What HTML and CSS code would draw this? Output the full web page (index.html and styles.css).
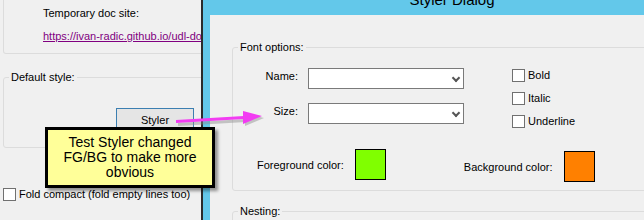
FILE: index.html
```html
<!DOCTYPE html>
<html>
<head>
  <title>Styler Dialog</title>
  <link rel="stylesheet" href="styles.css">
</head>
<body>

  <div class="screen">

    <section class="owner">
      <div class="group doc-group">
        <div class="doc-label">Temporary doc site:</div>
        <a class="doc-link" href="#">https://ivan-radic.github.io/udl-documentation/</a>
      </div>

      <fieldset class="group style-group">
        <legend>Default style:</legend>
        <div class="style-row">
          <button class="btn default">Styler</button>
        </div>
      </fieldset>

      <label class="check fold"><span class="box"></span>Fold compact (fold empty lines too)</label>
    </section>

    <section class="dialog">
      <div class="titlebar">Styler Dialog</div>
      <div class="client">

        <fieldset class="group font-group">
          <legend>Font options:</legend>
          <div class="font-top">
            <div class="combos">
              <div class="field">
                <label class="field-label">Name:</label>
                <div class="combo"><span class="chev"></span></div>
              </div>
              <div class="field">
                <label class="field-label">Size:</label>
                <div class="combo"><span class="chev"></span></div>
              </div>
            </div>
            <div class="styles">
              <label class="check"><span class="box"></span>Bold</label>
              <label class="check"><span class="box"></span>Italic</label>
              <label class="check"><span class="box"></span>Underline</label>
            </div>
          </div>
          <div class="colors">
            <div class="color fg">
              <span>Foreground color:</span>
              <span class="swatch green"></span>
            </div>
            <div class="color bg">
              <span>Background color:</span>
              <span class="swatch orange"></span>
            </div>
          </div>
        </fieldset>

        <fieldset class="group nest-group">
          <legend>Nesting:</legend>
        </fieldset>

      </div>
    </section>

    <!-- annotation drawn over the screenshot -->
    <div class="callout">Test Styler changed FG/BG to make more obvious</div>
    <svg class="arrow" width="100" height="24" viewBox="0 0 100 24">
      <g transform="translate(2,2)" fill="#8c8c8c" opacity="0.45">
        <polygon points="0,10 68,6 68,9 0,13" />
        <polygon points="67,0 86,5 67,13" />
      </g>
      <polygon points="0,9 68,5 68,8 0,12" fill="#f23cf2" />
      <polygon points="67,0 86,5 67,13" fill="#f23cf2" />
    </svg>

  </div>

</body>
</html>
```

FILE: styles.css
```css
*{
    box-sizing: border-box;
}

body{
    margin: 0;
    font-family: "Liberation Sans", Arial, sans-serif;
    font-size: 11px;
    color: #000;
    background: #f0f0f0;
}

.screen{
    position: relative;
    width: 644px;
    height: 220px;
    overflow: hidden;
}

/* left window (owner form) */
.owner{
    width: 201px;
    height: 220px;
    overflow: hidden;
    background: #f0f0f0;
}

.group{
    border: 1px solid #dcdcdc;
    border-radius: 3px;
    margin: 0;
}

fieldset.group{
    padding: 0;
}

fieldset.group legend{
    padding: 0 2px;
    margin-left: 5px;
    line-height: 12px;
}

.doc-group{
    width: 230px;
    height: 56px;
    margin-left: 3px;
    margin-top: -2px;
    border-top: none;
    padding: 9px 0 0 39px;
}

.doc-label{
    line-height: 13px;
    margin-bottom: 10px;
}

.doc-link{
    color: #800080;
    line-height: 13px;
    white-space: nowrap;
}

.style-group{
    width: 230px;
    height: 77px;
    margin: 17px 0 0 3px;
}

.style-row{
    padding: 25px 0 0 112px;
}

.btn{
    font: inherit;
    width: 78px;
    height: 23px;
    background: #e5e5e5;
    border: 1px solid #adadad;
}

.btn.default{
    border-color: #3c7fb1;
}

.check{
    display: flex;
    align-items: center;
    gap: 3px;
    line-height: 13px;
}

.box{
    width: 13px;
    height: 13px;
    background: #fff;
    border: 1px solid #707070;
}

.fold{
    margin: 40px 0 0 3px;
}

/* styler dialog window */
.dialog{
    position: absolute;
    left: 201px;
    top: 0;
    width: 443px;
    height: 220px;
    background: #63c8ea;
    border-left: 2px solid #2b2b2b;
    padding-left: 7px;
    display: flex;
    flex-direction: column;
}

.titlebar{
    height: 15px;
    font-size: 15px;
    line-height: 15px;
    margin-top: -8px;
    padding-left: 50px;
    text-align: center;
    color: #000;
    white-space: nowrap;
}

.client{
    flex: 1;
    margin-top: 8px;
    background: #f0f0f0;
    padding: 26px 0 0 22px;
}

.font-group{
    width: 440px;
    height: 150px;
}

.font-group legend{
    margin-left: 6px;
}

.font-top{
    display: flex;
    margin-top: 15px;
}

.combos{
    display: flex;
    flex-direction: column;
    gap: 14px;
}

.field{
    display: flex;
    align-items: center;
}

.field-label{
    width: 75px;
    text-align: right;
    padding-right: 10px;
    margin-top: -5px;
}

.combo{
    position: relative;
    width: 156px;
    height: 21px;
    background: #fff;
    border: 1px solid #7a7a7a;
}

.chev{
    position: absolute;
    right: 4px;
    top: 6px;
    width: 6px;
    height: 6px;
    border-right: 2px solid #555;
    border-bottom: 2px solid #555;
    transform: rotate(45deg);
}

.styles{
    display: flex;
    flex-direction: column;
    gap: 10px;
    margin-left: 48px;
    margin-top: 1px;
}

.colors{
    display: flex;
    align-items: center;
    margin-top: 19px;
}

.color{
    display: flex;
    align-items: center;
    gap: 11px;
}

.fg{
    margin-left: 24px;
}

.bg{
    margin-left: 78px;
    margin-top: 4px;
}

.swatch{
    width: 31px;
    height: 31px;
    border: 1px solid #000;
}

.green{
    background: #80ff00;
}

.orange{
    background: #ff8000;
}

.nest-group{
    width: 440px;
    height: 40px;
    margin-top: 14px;
}

.nest-group legend{
    margin-left: 6px;
}

/* annotation */
.callout{
    position: absolute;
    left: 45px;
    top: 127px;
    width: 170px;
    height: 61px;
    padding: 5px 12px 0;
    background: #ffff99;
    border: 3px solid #000;
    box-shadow: 3px 3px 3px rgba(0, 0, 0, 0.4);
    font-size: 14px;
    line-height: 15px;
    text-align: center;
}

.arrow{
    position: absolute;
    left: 176px;
    top: 111px;
}
```
